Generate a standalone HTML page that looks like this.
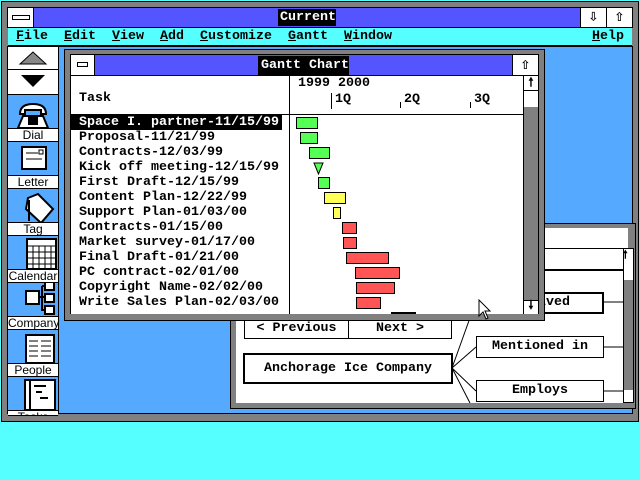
<!DOCTYPE html>
<html><head><meta charset="utf-8"><style>
*{margin:0;padding:0;box-sizing:border-box}
body{width:640px;height:480px;background:#55ffff;position:relative;overflow:hidden;font-family:"Liberation Mono",monospace;font-weight:bold;font-size:13.33px;color:#000}
div,span{position:absolute}
.bw{background:#808080}
.bd{background:#55aaff}
.w{background:#fff}
.k{background:#000}
.b{background:#5555ff}
.t{white-space:pre;line-height:15px}
.lbl{font-family:"Liberation Sans",sans-serif;font-weight:normal;font-size:12px;text-align:center;background:#fff;border-top:1px solid #000;border-bottom:1px solid #000;left:8px;width:50px;line-height:12px;height:14px}
.box{background:#fff;border:1px solid #000;text-align:center}
.bar{border:1px solid #000;height:12px}
.g{background:#55ff55}.y{background:#ffff55}.r{background:#ff5555}
</style></head><body>
<div class="bw" style="left:1px;top:1px;width:638px;height:421px;border:1px solid #000"></div>
<div class="bd" style="left:7px;top:46px;width:626px;height:368px;border:1px solid #000"></div>
<div class="b" style="left:7px;top:7px;width:626px;height:21px;border:1px solid #000"></div>
<div class="w" style="left:8px;top:8px;width:26px;height:19px;border-right:1px solid #000"><div class="w" style="left:4px;top:7px;width:18px;height:5px;border:1px solid #000"></div></div>
<div class="k t" style="left:278px;top:9px;width:58px;height:17px;color:#fff;line-height:17px;padding-left:2px">Current</div>
<div class="w" style="left:580px;top:8px;width:26px;height:19px;border-left:1px solid #000;text-align:center;font-size:16px;line-height:19px">⇩</div>
<div class="w" style="left:606px;top:8px;width:26px;height:19px;border-left:1px solid #000;text-align:center;font-size:16px;line-height:19px">⇧</div>
<div style="left:8px;top:28px;width:624px;height:18px;background:#55ffff;border-bottom:1px solid #000"></div>
<div class="t" style="left:16px;top:29px;line-height:16px"><u>F</u>ile  <u>E</u>dit  <u>V</u>iew  <u>A</u>dd  <u>C</u>ustomize  <u>G</u>antt  <u>W</u>indow</div>
<div class="t" style="left:592px;top:29px;line-height:16px"><u>H</u>elp</div>
<div class="bd" style="left:8px;top:47px;width:51px;height:367px;border-right:1px solid #000"></div>
<div class="w" style="left:8px;top:47px;width:50px;height:23px;border-bottom:1px solid #000"><svg width="50" height="23"><polygon points="25,5 12,17 38,17" fill="#888" stroke="#000"/></svg></div>
<div class="w" style="left:8px;top:70px;width:50px;height:25px;border-bottom:1px solid #000"><svg width="50" height="25"><polygon points="13,5 37,5 25,17" fill="#000"/></svg></div>
<svg style="position:absolute;left:8px;top:96px" width="50" height="320">
 <path d="M12,18 Q12,8 25,8 Q38,8 38,18 L33,18 L33,14 L17,14 L17,18 Z" fill="#fff" stroke="#000" stroke-width="2"/>
 <path d="M15,20 L35,20 L40,32 L10,32 Z" fill="#fff" stroke="#000" stroke-width="2"/>
 <rect x="20" y="21" width="10" height="8" fill="#000"/>
 <rect x="14" y="51" width="24" height="22" fill="#fff" stroke="#000" stroke-width="2"/>
 <line x1="18" y1="57" x2="30" y2="57" stroke="#000"/><rect x="31" y="54" width="4" height="4" fill="none" stroke="#000"/>
 <line x1="18" y1="63" x2="34" y2="63" stroke="#000"/>
 <polygon points="20,102 30,98 45,113 33,127 18,113" fill="#fff" stroke="#000" stroke-width="2"/>
 <line x1="21" y1="104" x2="21" y2="125" stroke="#000" stroke-width="2"/>
 <rect x="19" y="143" width="29" height="30" fill="#fff" stroke="#000" stroke-width="2"/>
 <path d="M19,150H48M19,156H48M19,162H48M19,168H48M25,150V173M31,150V173M37,150V173M43,150V173" stroke="#000"/>
 <rect x="18" y="195" width="13" height="13" fill="#fff" stroke="#000" stroke-width="2"/>
 <rect x="37" y="186" width="9" height="8" fill="#fff" stroke="#000" stroke-width="2"/>
 <rect x="37" y="198" width="9" height="8" fill="#fff" stroke="#000" stroke-width="2"/>
 <rect x="37" y="210" width="9" height="8" fill="#fff" stroke="#000" stroke-width="2"/>
 <path d="M31,201H37M34,190V214H37M34,190H37" stroke="#000" stroke-width="2" fill="none"/>
 <rect x="18" y="239" width="28" height="28" fill="#fff" stroke="#000" stroke-width="2"/>
 <path d="M21,245H30M33,245H43M21,250H30M33,250H43M21,255H30M33,255H43M21,260H30M33,260H43" stroke="#000"/>
 <rect x="17" y="284" width="30" height="30" fill="#fff" stroke="#000" stroke-width="2"/>
 <path d="M22,284V314M26,290H38M28,296H34M32,302H40" stroke="#000" stroke-width="2"/>
</svg>
<div class="lbl" style="top:128px">Dial</div>
<div class="lbl" style="top:175px">Letter</div>
<div class="lbl" style="top:222px">Tag</div>
<div class="lbl" style="top:269px">Calendar</div>
<div class="lbl" style="top:316px">Company</div>
<div class="lbl" style="top:363px">People</div>
<div class="lbl" style="top:410px;height:6px;overflow:hidden">Tasks</div>

<div class="bw" style="left:230px;top:223px;width:406px;height:186px;border:1px solid #000"></div>
<div class="w" style="left:236px;top:228px;width:392px;height:175px"></div>
<div class="k" style="left:236px;top:248px;width:388px;height:1px"></div>
<div class="k" style="left:236px;top:269px;width:388px;height:2px"></div>
<div class="w" style="left:623px;top:248px;width:11px;height:155px;border:1px solid #000"></div>
<div class="bw" style="left:624px;top:280px;width:9px;height:110px"></div>
<div class="t" style="left:623px;top:249px;font-size:11px">🠕</div>
<div class="box t" style="left:244px;top:318px;width:105px;height:21px;line-height:20px">&lt; Previous</div>
<div class="box t" style="left:348px;top:318px;width:104px;height:21px;line-height:20px">Next &gt;</div>
<div class="box t" style="left:243px;top:353px;width:210px;height:31px;border:2px solid #000;line-height:27px">Anchorage Ice Company</div>
<div class="box t" style="left:476px;top:336px;width:128px;height:22px;line-height:20px">Mentioned in</div>
<div class="box t" style="left:476px;top:380px;width:128px;height:22px;line-height:20px">Employs</div>
<div class="box t" style="left:472px;top:292px;width:132px;height:22px;border:2px solid #000;line-height:18px">Involved</div>
<svg style="position:absolute;left:440px;top:290px" width="190" height="120">
 <path d="M12,78L36,57M12,78L36,101M12,78L30,113M12,78L31,25M164,12H183M164,57H183M164,101H183" stroke="#000" fill="none"/>
</svg>

<div class="bw" style="left:64px;top:49px;width:481px;height:272px;border:1px solid #000"></div>
<div class="b" style="left:70px;top:54px;width:469px;height:22px;border:1px solid #000"></div>
<div class="w" style="left:71px;top:55px;width:24px;height:20px;border-right:1px solid #000"><div class="w" style="left:6px;top:7px;width:11px;height:5px;border:1px solid #000"></div></div>
<div class="k t" style="left:258px;top:56px;width:91px;height:19px;color:#fff;line-height:19px;padding-left:3px">Gantt Chart</div>
<div class="w" style="left:512px;top:55px;width:26px;height:20px;border-left:1px solid #000;text-align:center;font-size:16px;line-height:20px">⇧</div>
<div class="w" style="left:70px;top:76px;width:469px;height:238px;border-left:1px solid #000;border-right:1px solid #000"></div>
<div class="k" style="left:289px;top:76px;width:1px;height:238px"></div>
<div class="k" style="left:70px;top:114px;width:454px;height:1px"></div>
<div class="t" style="left:79px;top:91px">Task</div>
<div class="t" style="left:298px;top:76px">1999 2000</div>
<div class="k" style="left:331px;top:93px;width:1px;height:16px"></div>
<div class="t" style="left:335px;top:92px">1Q</div>
<div class="k" style="left:400px;top:102px;width:1px;height:6px"></div>
<div class="t" style="left:404px;top:92px">2Q</div>
<div class="k" style="left:470px;top:102px;width:1px;height:6px"></div>
<div class="t" style="left:474px;top:92px">3Q</div>
<div class="w" style="left:523px;top:76px;width:15px;height:238px;border-left:1px solid #000"></div>
<div class="bw" style="left:524px;top:107px;width:14px;height:193px"></div>
<div class="k" style="left:524px;top:90px;width:14px;height:1px"></div>
<div class="k" style="left:524px;top:300px;width:14px;height:1px"></div>
<div class="t" style="left:524px;top:76px;width:14px;text-align:center;font-size:12px">🠕</div>
<div class="t" style="left:524px;top:299px;width:14px;text-align:center;font-size:12px">🠗</div>
<div class="k" style="left:70px;top:115px;width:212px;height:15px"></div>
<div class="t" style="left:79px;top:115px"><span style="position:static;color:#fff">Space I. partner-11/15/99</span>
Proposal-11/21/99
Contracts-12/03/99
Kick off meeting-12/15/99
First Draft-12/15/99
Content Plan-12/22/99
Support Plan-01/03/00
Contracts-01/15/00
Market survey-01/17/00
Final Draft-01/21/00
PC contract-02/01/00
Copyright Name-02/02/00
Write Sales Plan-02/03/00</div>
<div class="bar g" style="left:296px;top:117px;width:22px"></div>
<div class="bar g" style="left:300px;top:132px;width:18px"></div>
<div class="bar g" style="left:309px;top:147px;width:21px"></div>
<svg style="position:absolute;left:313px;top:162px" width="12" height="13"><polygon points="1,1 10,1 5.5,12" fill="#55ff55" stroke="#000"/></svg>
<div class="bar g" style="left:318px;top:177px;width:12px"></div>
<div class="bar y" style="left:324px;top:192px;width:22px"></div>
<div class="bar y" style="left:333px;top:207px;width:8px"></div>
<div class="bar r" style="left:342px;top:222px;width:15px"></div>
<div class="bar r" style="left:343px;top:237px;width:14px"></div>
<div class="bar r" style="left:346px;top:252px;width:43px"></div>
<div class="bar r" style="left:355px;top:267px;width:45px"></div>
<div class="bar r" style="left:356px;top:282px;width:39px"></div>
<div class="bar r" style="left:356px;top:297px;width:25px"></div>
<div class="bar r" style="left:391px;top:312px;width:25px;height:2px"></div>
<svg style="position:absolute;left:478px;top:299px" width="14" height="22"><path d="M1,1V17L5,13L8,20L10,19L7,12H12Z" fill="#fff" stroke="#000"/></svg>
</body></html>
